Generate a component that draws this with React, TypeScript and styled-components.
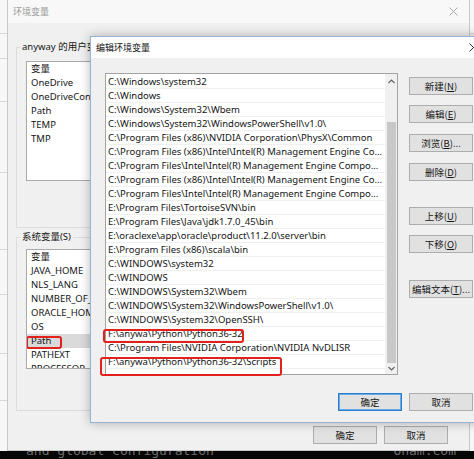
import styled, { createGlobalStyle } from "styled-components";

const GlobalStyle = createGlobalStyle`
  html, body {
    margin: 0;
    padding: 0;
    background: #000;
    overflow: hidden;
  }
  body {
    font-family: "Noto Sans", "Noto Sans CJK SC", sans-serif;
    font-size: 9.5px;
    color: #151515;
  }
`;

const Desktop = styled.div`
  position: relative;
  width: 474px;
  height: 459px;
  overflow: hidden;
  background: #060606;
`;

// window sitting behind everything, only its edges show
const BackWindow = styled.div`
  position: absolute;
  left: 0;
  top: 0;
  width: 474px;
  height: 451px;
  background: #f7f7f7;
  display: flex;
  flex-direction: column;
`;

const BackRule = styled.div<{ $gap: number }>`
  margin-top: ${(p) => p.$gap}px;
  height: 1px;
  background: #d6d6d6;
`;

const Console = styled.div`
  position: absolute;
  left: 0;
  bottom: 0;
  width: 474px;
  height: 8px;
  overflow: hidden;
  display: flex;
  justify-content: space-between;
  padding: 0 18px 0 26px;
  box-sizing: border-box;
  font-family: "DejaVu Sans Mono", monospace;
  font-size: 13px;
  line-height: 13px;
  color: #6e6e6e;
`;

const ConsoleText = styled.span`
  margin-top: -7px;
`;

const Window = styled.div<{ $active?: boolean }>`
  position: absolute;
  box-sizing: border-box;
  background: #f0f0f0;
  display: flex;
  flex-direction: column;
  border: 1px solid ${(p) => (p.$active ? "#94b4d8" : "#c8c8c8")};
  box-shadow: ${(p) => (p.$active ? "0 0 10px rgba(0, 0, 0, 0.28)" : "none")};
`;

const OuterWindow = styled(Window)`
  left: 7px;
  top: -1px;
  width: 463px;
  height: 452px;
`;

const InnerWindow = styled(Window)`
  left: 90px;
  top: 36px;
  width: 400px;
  height: 387px;
`;

const TitleBar = styled.div<{ $active?: boolean; $height: number }>`
  height: ${(p) => p.$height}px;
  flex: none;
  display: flex;
  align-items: center;
  justify-content: space-between;
  padding: 0 11px 0 5px;
  background: ${(p) => (p.$active ? "#ffffff" : "#f8f8f8")};
  color: ${(p) => (p.$active ? "#111" : "#9a9a9a")};
  font-family: "Noto Sans CJK SC", sans-serif;
  font-size: 9px;
`;

const OuterBody = styled.div`
  flex: 1;
  display: flex;
  flex-direction: column;
  padding: 17px 0 0 8px;
`;

const Group = styled.fieldset<{ $height: number; $inset: number }>`
  margin: 0;
  padding: ${(p) => p.$inset}px 0 0 9px;
  height: ${(p) => p.$height}px;
  width: 470px;
  min-width: 0;
  box-sizing: border-box;
  border: 1px solid #dcdcdc;

  & + & {
    margin-top: 2px;
  }
`;

const Legend = styled.legend`
  padding: 0 2px;
  margin-left: -6px;
  line-height: 14px;
`;

const VarList = styled.div`
  height: 120px;
  width: 430px;
  box-sizing: border-box;
  border: 1px solid #aaaaaa;
  background: #fff;
  overflow: hidden;
`;

const VarRow = styled.div<{ $selected?: boolean }>`
  position: relative;
  height: 14px;
  line-height: 14px;
  padding-left: 4px;
  white-space: nowrap;
  background: ${(p) => (p.$selected ? "#dadada" : "transparent")};
`;

// red annotation frame drawn over an entry
const Mark = styled.span<{ $left: number; $width: number; $height: number }>`
  position: absolute;
  left: ${(p) => p.$left}px;
  top: 2px;
  width: ${(p) => p.$width}px;
  height: ${(p) => p.$height}px;
  box-sizing: border-box;
  border: 2px solid #e3211c;
  border-radius: 3px;
  pointer-events: none;
`;

const ButtonRow = styled.div<{ $gapTop: number; $padRight: number; $width?: number }>`
  display: flex;
  justify-content: flex-end;
  gap: 7px;
  width: ${(p) => (p.$width ? `${p.$width}px` : "auto")};
  margin-top: ${(p) => p.$gapTop}px;
  padding-right: ${(p) => p.$padRight}px;
`;

const Button = styled.button<{ $default?: boolean }>`
  width: 64px;
  height: 18px;
  padding: 0;
  flex: none;
  font-family: "Noto Sans CJK SC", sans-serif;
  font-size: 9.5px;
  line-height: 16px;
  color: #151515;
  background: #e1e1e1;
  border: 1px solid ${(p) => (p.$default ? "#2a7fd4" : "#adadad")};
  box-shadow: ${(p) => (p.$default ? "inset 0 0 0 1px #6aa8e6" : "none")};
  box-sizing: border-box;
`;

const InnerBody = styled.div`
  flex: 1;
  display: flex;
  flex-direction: column;
  padding: 15px 0 0 14px;
`;

const EditorArea = styled.div`
  display: grid;
  grid-template-columns: 293px 64px;
  column-gap: 11px;
  width: 368px;
`;

const PathList = styled.div`
  height: 302px;
  box-sizing: border-box;
  border: 1px solid #a3a3a3;
  background: #fff;
  display: flex;
`;

const PathRows = styled.div`
  flex: 1;
  min-width: 0;
  padding-top: 1px;
`;

const PathRow = styled.div`
  position: relative;
  height: 14px;
  box-sizing: border-box;
  border-bottom: 1px solid #f0f0f0;
`;

const PathText = styled.div`
  padding: 0 3px 0 2px;
  line-height: 14px;
  white-space: nowrap;
  overflow: hidden;
  text-overflow: ellipsis;
`;

const ScrollTrack = styled.div`
  width: 12px;
  flex: none;
  background: #f0f0f0;
  display: flex;
  flex-direction: column;
  align-items: center;
`;

const ScrollArrow = styled.div<{ $height: number }>`
  height: ${(p) => p.$height}px;
  flex: none;
  display: flex;
  align-items: center;
  justify-content: center;
`;

const Thumb = styled.div`
  flex: 1;
  width: 9px;
  margin-top: 34px;
  background: #c8c8c8;
`;

const SideButtons = styled.div`
  display: flex;
  flex-direction: column;
  padding-top: 4px;
`;

const SideButton = styled(Button)<{ $space: number }>`
  margin-top: ${(p) => p.$space}px;
`;

const Close = ({ color }: { color: string }) => (
  <svg width="9" height="9" viewBox="0 0 9 9">
    <path d="M0.5 0.5L8.5 8.5M8.5 0.5L0.5 8.5" stroke={color} strokeWidth="1" />
  </svg>
);

const Chevron = ({ up }: { up?: boolean }) => (
  <svg width="7" height="5" viewBox="0 0 7 5">
    <path
      d={up ? "M0.5 4L3.5 1L6.5 4" : "M0.5 1L3.5 4L6.5 1"}
      stroke="#606060"
      strokeWidth="1.1"
      fill="none"
    />
  </svg>
);

const userVars = ["变量", "OneDrive", "OneDriveConsumer", "Path", "TEMP", "TMP"];
const systemVars = [
  "变量",
  "JAVA_HOME",
  "NLS_LANG",
  "NUMBER_OF_PROCESSORS",
  "ORACLE_HOME",
  "OS",
  "Path",
  "PATHEXT",
  "PROCESSOR_ARCHITECTURE",
];

const paths = [
  "C:\\Windows\\system32",
  "C:\\Windows",
  "C:\\Windows\\System32\\Wbem",
  "C:\\Windows\\System32\\WindowsPowerShell\\v1.0\\",
  "C:\\Program Files (x86)\\NVIDIA Corporation\\PhysX\\Common",
  "C:\\Program Files (x86)\\Intel\\Intel(R) Management Engine Components\\DAL",
  "C:\\Program Files\\Intel\\Intel(R) Management Engine Components\\DAL",
  "C:\\Program Files (x86)\\Intel\\Intel(R) Management Engine Components\\IPT",
  "C:\\Program Files\\Intel\\Intel(R) Management Engine Components\\IPT",
  "E:\\Program Files\\TortoiseSVN\\bin",
  "E:\\Program Files\\Java\\jdk1.7.0_45\\bin",
  "E:\\oraclexe\\app\\oracle\\product\\11.2.0\\server\\bin",
  "E:\\Program Files (x86)\\scala\\bin",
  "C:\\WINDOWS\\system32",
  "C:\\WINDOWS",
  "C:\\WINDOWS\\System32\\Wbem",
  "C:\\WINDOWS\\System32\\WindowsPowerShell\\v1.0\\",
  "C:\\WINDOWS\\System32\\OpenSSH\\",
  "F:\\anywa\\Python\\Python36-32",
  "C:\\Program Files\\NVIDIA Corporation\\NVIDIA NvDLISR",
  "F:\\anywa\\Python\\Python36-32\\Scripts",
];

// frames drawn around the python entries
const pathMarks: Record<number, { left: number; width: number; height: number }> = {
  18: { left: -3, width: 141, height: 14 },
  20: { left: -6, width: 182, height: 19 },
};

const sideActions: { label: string; key: string; tail?: string; space: number }[] = [
  { label: "新建", key: "N", space: 0 },
  { label: "编辑", key: "E", space: 10 },
  { label: "浏览", key: "B", tail: "...", space: 11 },
  { label: "删除", key: "D", space: 11 },
  { label: "上移", key: "U", space: 26 },
  { label: "下移", key: "O", space: 10 },
  { label: "编辑文本", key: "T", tail: "...", space: 27 },
];

function App() {
  return (
    <Desktop>
      <GlobalStyle />
      <BackWindow>
        <BackRule $gap={33} />
        <BackRule $gap={24} />
        <BackRule $gap={42} />
        <BackRule $gap={70} />
        <BackRule $gap={76} />
        <BackRule $gap={44} />
        <BackRule $gap={58} />
        <BackRule $gap={46} />
      </BackWindow>
      <Console>
        <ConsoleText>and global configuration</ConsoleText>
        <ConsoleText>Oham.com</ConsoleText>
      </Console>

      <OuterWindow>
        <TitleBar $height={23}>
          <span>环境变量</span>
          <Close color="#a8a8a8" />
        </TitleBar>
        <OuterBody>
          <Group $height={188} $inset={7}>
            <Legend>anyway 的用户变量(U)</Legend>
            <VarList>
              {userVars.map((v) => (
                <VarRow key={v}>{v}</VarRow>
              ))}
            </VarList>
          </Group>
          <Group $height={181} $inset={5}>
            <Legend>系统变量(S)</Legend>
            <VarList>
              {systemVars.map((v) => (
                <VarRow key={v} $selected={v === "Path"}>
                  {v}
                  {v === "Path" && <Mark $left={-1} $width={36} $height={13} />}
                </VarRow>
              ))}
            </VarList>
          </Group>
          <ButtonRow $gapTop={15} $padRight={21}>
            <Button>确定</Button>
            <Button>取消</Button>
          </ButtonRow>
        </OuterBody>
      </OuterWindow>

      <InnerWindow $active>
        <TitleBar $active $height={21}>
          <span>编辑环境变量</span>
          <Close color="#333" />
        </TitleBar>
        <InnerBody>
          <EditorArea>
            <PathList>
              <PathRows>
                {paths.map((p, i) => (
                  <PathRow key={i}>
                    <PathText>{p}</PathText>
                    {pathMarks[i] && (
                      <Mark
                        $left={pathMarks[i].left}
                        $width={pathMarks[i].width}
                        $height={pathMarks[i].height}
                      />
                    )}
                  </PathRow>
                ))}
              </PathRows>
              <ScrollTrack>
                <ScrollArrow $height={14}>
                  <Chevron up />
                </ScrollArrow>
                <Thumb />
                <ScrollArrow $height={11}>
                  <Chevron />
                </ScrollArrow>
              </ScrollTrack>
            </PathList>
            <SideButtons>
              {sideActions.map((a) => (
                <SideButton key={a.key} $space={a.space}>
                  {a.label}(<u>{a.key}</u>){a.tail}
                </SideButton>
              ))}
            </SideButtons>
          </EditorArea>
          <ButtonRow $gapTop={18} $padRight={0} $width={368}>
            <Button $default>确定</Button>
            <Button>取消</Button>
          </ButtonRow>
        </InnerBody>
      </InnerWindow>
    </Desktop>
  );
}

export default App;
